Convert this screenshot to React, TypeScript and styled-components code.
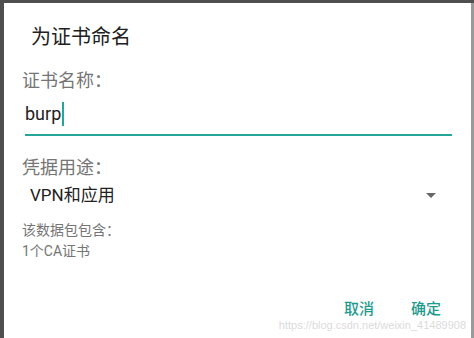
import * as React from 'react';
import styled, { createGlobalStyle } from 'styled-components';

const GlobalStyle = createGlobalStyle`
  html, body {
    margin: 0;
    padding: 0;
    width: 474px;
    height: 338px;
    overflow: hidden;
    background: #555555;
  }
`;

const Frame = styled.div`
  width: 474px;
  height: 338px;
  box-sizing: border-box;
  padding: 3px 0 0 4px;
  background: #4f4f4f;
  display: flex;
`;

const Dialog = styled.div`
  flex: 1;
  background: #ffffff;
  border-right: 3px solid #9a9a9a;
  padding: 22px 19px 0 18px;
  font-family: Roboto, 'Noto Sans CJK SC', sans-serif;
  display: flex;
  flex-direction: column;
  position: relative;
`;

const Title = styled.h1`
  margin: 0 0 21px 9px;
  font-size: 20px;
  line-height: 24px;
  font-weight: 400;
  color: #212121;
`;

const Label = styled.div<{ $small?: boolean }>`
  font-size: ${(p) => (p.$small ? '14px' : '18px')};
  line-height: ${(p) => (p.$small ? '21px' : '22px')};
  color: #757575;
`;

const Field = styled.div`
  margin: 10px 0 21px 3px;
  padding-bottom: 8px;
  border-bottom: 2px solid #26a69a;
  display: flex;
  align-items: center;
  font-size: 18px;
  line-height: 22px;
  color: #212121;
`;

const Caret = styled.span`
  display: inline-block;
  width: 2px;
  height: 24px;
  margin-left: 1px;
  background: #26a69a;
`;

const Spinner = styled.div`
  margin: 5px 0 14px 8px;
  display: flex;
  align-items: center;
  justify-content: space-between;
  font-size: 17px;
  line-height: 22px;
  color: #212121;
`;

const Arrow = styled.span`
  width: 0;
  height: 0;
  margin-right: 16px;
  border-left: 5px solid transparent;
  border-right: 5px solid transparent;
  border-top: 5px solid #666666;
`;

const Buttons = styled.div`
  margin-top: 38px;
  display: flex;
  justify-content: flex-end;
  gap: 37px;
  padding-right: 11px;
`;

const Button = styled.span`
  font-size: 15px;
  line-height: 18px;
  color: #1f9a8d;
  font-weight: 500;
`;

const Watermark = styled.div`
  position: absolute;
  right: 5px;
  bottom: 7px;
  font-family: Arial, 'Liberation Sans', sans-serif;
  font-size: 11px;
  line-height: 12px;
  color: rgba(180, 180, 180, 0.5);
`;

export default function App() {
  return (
    <>
      <GlobalStyle />
      <Frame>
        <Dialog>
          <Title>为证书命名</Title>
          <Label>证书名称：</Label>
          <Field>
            burp
            <Caret />
          </Field>
          <Label>凭据用途：</Label>
          <Spinner>
            VPN和应用
            <Arrow />
          </Spinner>
          <Label $small>该数据包包含：</Label>
          <Label $small>1个CA证书</Label>
          <Buttons>
            <Button>取消</Button>
            <Button>确定</Button>
          </Buttons>
          <Watermark>https://blog.csdn.net/weixin_41489908</Watermark>
        </Dialog>
      </Frame>
    </>
  );
}
